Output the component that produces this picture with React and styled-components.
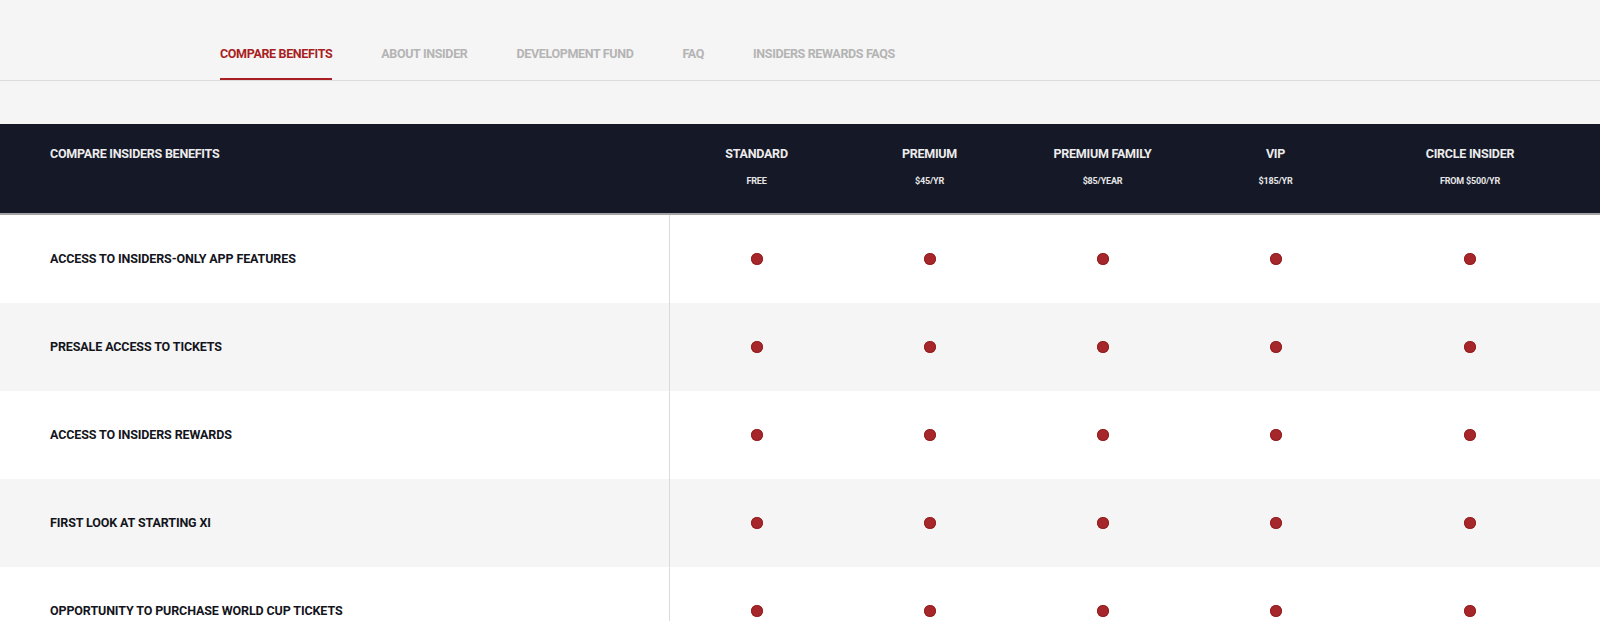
import React from "react";
import styled, { createGlobalStyle } from "styled-components";

const GlobalStyle = createGlobalStyle`
  body {
    margin: 0;
    background: #f5f5f5;
    font-family: Roboto, "Liberation Sans", sans-serif;
    -webkit-font-smoothing: antialiased;
  }
`;

const Page = styled.div`
  width: 1600px;
  min-height: 642px;
  background: #f5f5f5;
`;

const Tabs = styled.nav`
  display: flex;
  align-items: flex-end;
  gap: 49px;
  height: 80px;
  padding-left: 220px;
  border-bottom: 1px solid #dcdcdc;
`;

const Tab = styled.a`
  display: block;
  padding-bottom: 16px;
  border-bottom: 2px solid ${(p) => (p.$active ? "#a81e22" : "transparent")};
  font-size: 12.5px;
  line-height: 16px;
  font-weight: 700;
  letter-spacing: -0.35px;
  text-transform: uppercase;
  color: ${(p) => (p.$active ? "#a81e22" : "#b4b4b4")};
  cursor: pointer;
  white-space: nowrap;
`;

const Spacer = styled.div`
  height: 43px;
`;

const Table = styled.section`
  background: #fff;
`;

const cols = "670px repeat(4, 173px) 1fr";

const Head = styled.div`
  display: grid;
  grid-template-columns: ${cols};
  padding-right: 22px;
  height: 89px;
  background: #151827;
  border-bottom: 2px solid #a3a3a3;
`;

const HeadCell = styled.div`
  display: flex;
  flex-direction: column;
  align-items: ${(p) => (p.$first ? "flex-start" : "center")};
  padding-top: 22px;
  padding-left: ${(p) => (p.$first ? "50px" : "0")};
`;

const HeadTitle = styled.div`
  font-size: 12.5px;
  line-height: 16px;
  font-weight: 700;
  letter-spacing: -0.25px;
  color: #ececec;
  white-space: nowrap;
`;

const Price = styled.div`
  margin-top: 13px;
  font-size: 9px;
  line-height: 12px;
  font-weight: 700;
  letter-spacing: -0.2px;
  color: #e6e6e6;
  white-space: nowrap;
`;

const Row = styled.div`
  display: grid;
  grid-template-columns: ${cols};
  padding-right: 22px;
  height: 88px;
  background: ${(p) => (p.$shade ? "#f5f5f5" : "#fff")};
`;

const Label = styled.div`
  position: relative;
  display: flex;
  align-items: center;
  padding-left: 50px;
  font-size: 12.5px;
  line-height: 16px;
  font-weight: 700;
  letter-spacing: -0.12px;
  color: #14151c;
  white-space: nowrap;

  &::after {
    content: "";
    position: absolute;
    top: 0;
    right: 0;
    width: 1px;
    height: ${(p) => (p.$last ? "54px" : "100%")};
    background: #dadada;
  }
`;

const Cell = styled.div`
  display: flex;
  align-items: center;
  justify-content: center;
`;

const Dot = styled.span`
  display: block;
  width: 12px;
  height: 12px;
  border-radius: 50%;
  background: #a6272b;
  box-shadow: inset 0 0 0 1px #94201f;
`;

const tabs = [
  "Compare Benefits",
  "About Insider",
  "Development Fund",
  "FAQ",
  "Insiders Rewards FAQs",
];

const tiers = [
  { name: "STANDARD", price: "FREE" },
  { name: "PREMIUM", price: "$45/YR" },
  { name: "PREMIUM FAMILY", price: "$85/YEAR" },
  { name: "VIP", price: "$185/YR" },
  { name: "CIRCLE INSIDER", price: "FROM $500/YR" },
];

const benefits = [
  "ACCESS TO INSIDERS-ONLY APP FEATURES",
  "PRESALE ACCESS TO TICKETS",
  "ACCESS TO INSIDERS REWARDS",
  "FIRST LOOK AT STARTING XI",
  "OPPORTUNITY TO PURCHASE WORLD CUP TICKETS",
];

export default function App() {
  return (
    <Page>
      <GlobalStyle />
      <Tabs>
        {tabs.map((t, i) => (
          <Tab key={t} $active={i === 0}>
            {t}
          </Tab>
        ))}
      </Tabs>
      <Spacer />
      <Table>
        <Head>
          <HeadCell $first>
            <HeadTitle>COMPARE INSIDERS BENEFITS</HeadTitle>
          </HeadCell>
          {tiers.map((t) => (
            <HeadCell key={t.name}>
              <HeadTitle>{t.name}</HeadTitle>
              <Price>{t.price}</Price>
            </HeadCell>
          ))}
        </Head>
        {benefits.map((b, i) => (
          <Row key={b} $shade={i % 2 === 1}>
            <Label $last={i === benefits.length - 1}>{b}</Label>
            {tiers.map((t) => (
              <Cell key={t.name}>
                <Dot />
              </Cell>
            ))}
          </Row>
        ))}
      </Table>
    </Page>
  );
}
